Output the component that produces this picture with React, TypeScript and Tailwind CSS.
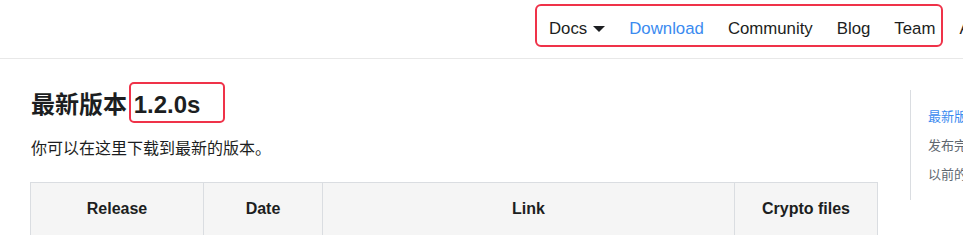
import React from "react";

const font = { fontFamily: '"Liberation Sans", "Noto Sans CJK SC", sans-serif' };

export default function App() {
  return (
    <div className="w-[963px] h-[235px] overflow-hidden bg-white text-[#1c1e21]" style={font}>
      <header className="relative h-[59px] border-b border-[#e8e8e8] overflow-hidden">
        <nav className="flex items-center h-[57px] pl-[537px] whitespace-nowrap text-[16.8px]">
          <a className="flex items-center px-3 shrink-0">
            Docs
            <svg width="12" height="8" viewBox="0 0 12 8" className="ml-[6px]">
              <path d="M0 1 L12 1 L6 7 Z" fill="#1c1e21" />
            </svg>
          </a>
          <a className="px-3 shrink-0 text-[#3b8bf0]">Download</a>
          <a className="px-3 shrink-0">Community</a>
          <a className="px-3 shrink-0">Blog</a>
          <a className="px-3 shrink-0">Team</a>
          <a className="px-3 shrink-0">About</a>
        </nav>
        <div className="absolute left-[535px] top-[4px] w-[408px] h-[43px] border-2 border-[#ef3249] rounded-[6px]" />
      </header>
      <div className="flex">
        <main className="w-[848px] ml-[30px] shrink-0">
          <h1 className="relative mt-[24px] text-[24px] font-bold leading-[44px] pl-[1px]">
            最新版本 1.2.0s
            <span className="absolute left-[99px] top-[-1px] w-[96px] h-[41px] border-2 border-[#ef3249] rounded-[5px]" />
          </h1>
          <p className="mt-[10px] text-[16px] leading-[24px] pl-[1px]">你可以在这里下载到最新的版本。</p>
          <table className="mt-[21px] w-full border-collapse text-[16px]">
            <thead>
              <tr className="bg-[#f5f5f5]">
                <th className="w-[173px] h-[53px] border border-[#dadde1] font-bold">Release</th>
                <th className="w-[119px] border border-[#dadde1] font-bold">Date</th>
                <th className="w-[412px] border border-[#dadde1] font-bold">Link</th>
                <th className="border border-[#dadde1] font-bold">Crypto files</th>
              </tr>
            </thead>
          </table>
        </main>
        <aside className="ml-[32px] mt-[31px] h-[110px] border-l border-[#dadde1] pl-[17px] text-[13px] leading-[29px] whitespace-nowrap overflow-hidden">
          <div className="pt-[12px] text-[#3b8bf0]">最新版本</div>
          <div className="text-[#606770]">发布完整性</div>
          <div className="text-[#606770]">以前的版本</div>
        </aside>
      </div>
    </div>
  );
}
